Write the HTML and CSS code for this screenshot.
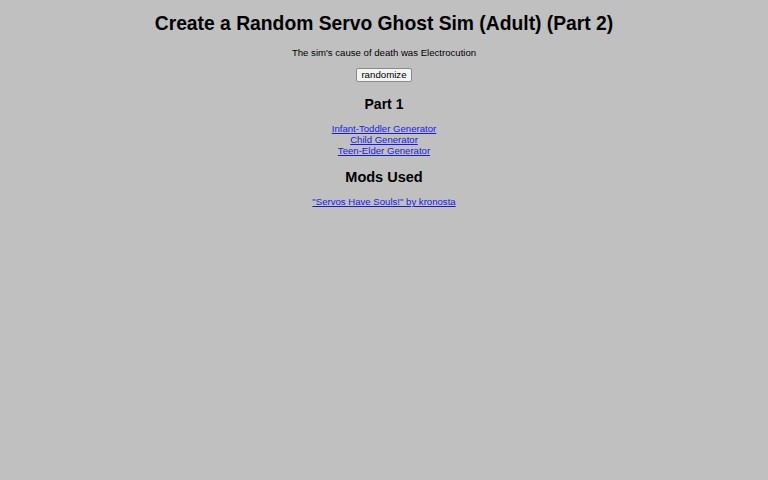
FILE: index.html
```html
<!DOCTYPE html>
<html lang="en">

<head>
    <meta charset="UTF-8">
    <meta name="viewport" content="width=device-width, initial-scale=1.0">
    <title>Create a Random Servo Ghost Sim (Adult) (Part 2)</title>
    <link rel="stylesheet" href="styles.css">
</head>

<body>
    <div class="container">
        <h1>Create a Random Servo Ghost Sim (Adult) (Part 2)</h1>
        <p class="result">The sim's cause of death was <span id="death">Electrocution</span></p>
        <button type="button" id="randomize">randomize</button>

        <h2 class="part">Part 1</h2>
        <div class="links">
            <a href="#">Infant-Toddler Generator</a>
            <a href="#">Child Generator</a>
            <a href="#">Teen-Elder Generator</a>
        </div>

        <h2 class="mods">Mods Used</h2>
        <div class="links">
            <a href="#">"Servos Have Souls!" by kronosta</a>
        </div>
    </div>

    <script>
        const causes = ['Electrocution', 'Fire', 'Drowning', 'Starvation', 'Old Age', 'Satellite', 'Flies', 'Cow Plant'];

        document.getElementById('randomize').addEventListener('click', () => {
            const pick = causes[Math.floor(Math.random() * causes.length)];
            document.getElementById('death').textContent = pick;
        });
    </script>
</body>

</html>
```

FILE: styles.css
```css
body {
    font-family: 'Liberation Sans', Arial, sans-serif;
    background-color: #C0C0C0;
    color: #000;
    margin: 0;
    padding: 8px;
}

.container {
    text-align: center;
}

h1 {
    font-size: 19.3px;
    line-height: 22px;
    margin: 5px 0 12px;
}

.result {
    font-size: 9.6px;
    line-height: 11px;
    margin: 0 0 10px;
}

button {
    display: block;
    margin: 0 auto;
    font-family: 'Liberation Sans', Arial, sans-serif;
    font-size: 9.7px;
    line-height: 12px;
    background-color: #F4F4F4;
    border: 1px solid #8A8A8A;
    border-radius: 2px;
    padding: 0 4px;
    color: #000;
}

h2 {
    font-size: 14px;
    line-height: 16px;
}

.part {
    margin: 14px 0 11px;
}

.mods {
    font-size: 14.5px;
    margin: 13px 0 11px;
}

.links a {
    display: block;
    width: max-content;
    margin: 0 auto;
    font-size: 9.6px;
    line-height: 11px;
    color: #1A1AE6;
}
```
